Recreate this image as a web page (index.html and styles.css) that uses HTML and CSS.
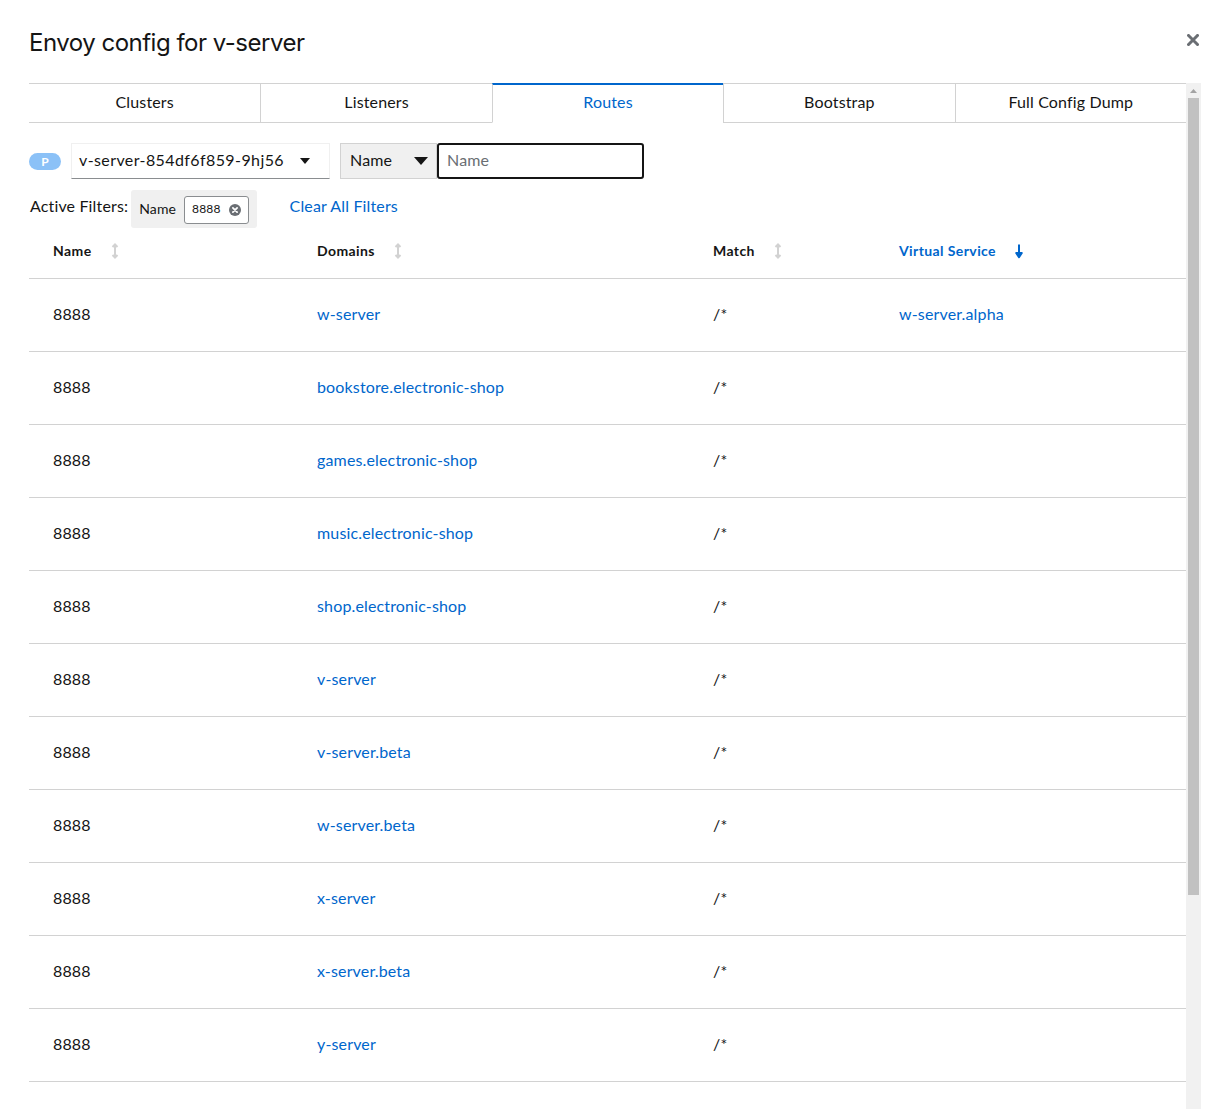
FILE: index.html
```html
<!DOCTYPE html>
<html lang="en">
<head>
<meta charset="utf-8">
<title>Envoy config for v-server</title>
<link rel="stylesheet" href="styles.css">
</head>
<body>
<div class="modal">
  <header class="modal-header">
    <h1 class="modal-title">Envoy config for v-server</h1>
    <button class="close-btn" aria-label="Close">
      <svg viewBox="0 0 12 12" width="12" height="12"><path d="M1.5 1.5 L10.5 10.5 M10.5 1.5 L1.5 10.5" stroke="#6a6e73" stroke-width="3" stroke-linecap="square"/></svg>
    </button>
  </header>
  <div class="modal-body">
    <div class="content">
      <nav class="tabs">
        <div class="tab">Clusters</div>
        <div class="tab">Listeners</div>
        <div class="tab active">Routes</div>
        <div class="tab">Bootstrap</div>
        <div class="tab">Full Config Dump</div>
      </nav>

      <div class="toolbar">
        <span class="pod-badge">P</span>
        <div class="pod-select">
          <span class="pod-name">v-server-854df6f859-9hj56</span>
          <svg class="caret" viewBox="0 0 10 6" width="10" height="6"><path d="M0 0 H10 L5 6 Z" fill="#151515"/></svg>
        </div>
        <div class="filter-group">
          <div class="filter-type">
            <span>Name</span>
            <svg class="caret" viewBox="0 0 14 8" width="14" height="8"><path d="M0 0 H14 L7 8 Z" fill="#151515"/></svg>
          </div>
          <div class="filter-input"><span class="placeholder">Name</span></div>
        </div>
      </div>

      <div class="active-filters">
        <span class="af-label">Active Filters:</span>
        <div class="chip-group">
          <span class="chip-cat">Name</span>
          <span class="chip">8888
            <svg class="chip-x" viewBox="0 0 12 12" width="12" height="12"><circle cx="6" cy="6" r="6" fill="#6a6e73"/><path d="M3.9 3.9 L8.1 8.1 M8.1 3.9 L3.9 8.1" stroke="#fff" stroke-width="1.8" stroke-linecap="round"/></svg>
          </span>
        </div>
        <a class="clear-link">Clear All Filters</a>
      </div>

      <table class="routes">
        <colgroup>
          <col class="c1"><col class="c2"><col class="c3"><col class="c4">
        </colgroup>
        <thead>
          <tr>
            <th>Name<svg class="sort" viewBox="0 0 8 16" width="8" height="16"><path d="M4 1.5 V14.5 M1.5 4 L4 1.5 L6.5 4 M1.5 12 L4 14.5 L6.5 12" stroke="#d2d2d2" stroke-width="2" fill="none"/></svg></th>
            <th>Domains<svg class="sort" viewBox="0 0 8 16" width="8" height="16"><path d="M4 1.5 V14.5 M1.5 4 L4 1.5 L6.5 4 M1.5 12 L4 14.5 L6.5 12" stroke="#d2d2d2" stroke-width="2" fill="none"/></svg></th>
            <th>Match<svg class="sort" viewBox="0 0 8 16" width="8" height="16"><path d="M4 1.5 V14.5 M1.5 4 L4 1.5 L6.5 4 M1.5 12 L4 14.5 L6.5 12" stroke="#d2d2d2" stroke-width="2" fill="none"/></svg></th>
            <th class="sorted">Virtual Service<svg class="sort" viewBox="0 0 8 16" width="8" height="16"><path d="M4 1.5 V13 M1.2 10 L4 14.2 L6.8 10 Z" stroke="#06c" stroke-width="2" fill="#06c" stroke-linejoin="round"/></svg></th>
          </tr>
        </thead>
        <tbody>
          <tr><td>8888</td><td><a>w-server</a></td><td>/*</td><td><a>w-server.alpha</a></td></tr>
          <tr><td>8888</td><td><a>bookstore.electronic-shop</a></td><td>/*</td><td></td></tr>
          <tr><td>8888</td><td><a>games.electronic-shop</a></td><td>/*</td><td></td></tr>
          <tr><td>8888</td><td><a>music.electronic-shop</a></td><td>/*</td><td></td></tr>
          <tr><td>8888</td><td><a>shop.electronic-shop</a></td><td>/*</td><td></td></tr>
          <tr><td>8888</td><td><a>v-server</a></td><td>/*</td><td></td></tr>
          <tr><td>8888</td><td><a>v-server.beta</a></td><td>/*</td><td></td></tr>
          <tr><td>8888</td><td><a>w-server.beta</a></td><td>/*</td><td></td></tr>
          <tr><td>8888</td><td><a>x-server</a></td><td>/*</td><td></td></tr>
          <tr><td>8888</td><td><a>x-server.beta</a></td><td>/*</td><td></td></tr>
          <tr><td>8888</td><td><a>y-server</a></td><td>/*</td><td></td></tr>
        </tbody>
      </table>
    </div>
    <div class="scrollbar" aria-hidden="true">
      <div class="sb-button">
        <svg viewBox="0 0 7 4" width="7" height="4"><path d="M0 4 L3.5 0 L7 4 Z" fill="#a3a3a3"/></svg>
      </div>
      <div class="sb-thumb"></div>
    </div>
  </div>
</div>
</body>
</html>
```

FILE: styles.css
```css
html, body {
  margin: 0;
  padding: 0;
  background: #fff;
  overflow: hidden;
  height: 100%;
}

body {
  font-family: Lato, "Liberation Sans", sans-serif;
  font-size: 16px;
  letter-spacing: 0.15px;
  color: #151515;
}

.modal {
  position: relative;
  padding: 0 24px 0 29px;
}

.modal-header {
  padding-top: 28px;
  height: 83px;
  box-sizing: border-box;
}

.modal-title {
  margin: 0;
  font-family: Inter, "Open Sans", sans-serif;
  font-size: 24px;
  font-weight: 400;
  line-height: 30px;
  letter-spacing: -0.5px;
}

.close-btn {
  position: absolute;
  top: 34px;
  right: 26px;
  width: 12px;
  height: 12px;
  padding: 0;
  border: 0;
  background: none;
  display: flex;
}

.modal-body {
  height: calc(100vh - 83px);
  display: flex;
}

.content {
  flex: 1;
  min-width: 0;
  overflow: hidden;
}

.scrollbar {
  width: 15px;
  flex: none;
  background: #f1f1f1;
  display: flex;
  flex-direction: column;
}

.sb-button {
  height: 15px;
  display: flex;
  align-items: center;
  justify-content: center;
}

.sb-thumb {
  height: 797px;
  margin: 0 2px;
  background: #c1c1c1;
}

.tabs {
  display: grid;
  grid-template-columns: repeat(5, 1fr);
}

.tab {
  height: 40px;
  box-sizing: border-box;
  border-top: 1px solid #d2d2d2;
  border-bottom: 1px solid #d2d2d2;
  display: flex;
  align-items: center;
  justify-content: center;
  padding-bottom: 4px;
  font-size: 16px;
  color: #151515;
}

.tab + .tab {
  border-left: 1px solid #d2d2d2;
}

.tab.active {
  border-top: 2px solid #06c;
  border-bottom-color: transparent;
  color: #06c;
  padding-bottom: 5px;
}

.toolbar {
  display: flex;
  align-items: center;
  margin-top: 20px;
  height: 36px;
}

.pod-badge {
  width: 32px;
  height: 17px;
  border-radius: 9px;
  background: #8bc1f7;
  color: #fff;
  font-size: 12px;
  font-weight: 700;
  display: flex;
  align-items: center;
  justify-content: center;
  margin-right: 10px;
}

.pod-select {
  width: 259px;
  height: 36px;
  box-sizing: border-box;
  border: 1px solid #f0f0f0;
  border-bottom-color: #8a8d90;
  display: flex;
  align-items: center;
  justify-content: space-between;
  padding: 0 19px 4px 7px;
  margin-right: 10px;
}

.pod-select .caret {
  margin-top: 4px;
}

.pod-name {
  letter-spacing: 0.4px;
}

.filter-group {
  display: flex;
  height: 36px;
}

.filter-type {
  width: 97px;
  box-sizing: border-box;
  background: #f0f0f0;
  border: 1px solid #d2d2d2;
  display: flex;
  align-items: center;
  justify-content: space-between;
  padding: 0 8px 4px 9px;
}

.filter-type .caret {
  margin-top: 4px;
}

.filter-input {
  width: 207px;
  box-sizing: border-box;
  border: 2px solid #151515;
  border-radius: 3px;
  display: flex;
  align-items: center;
  padding: 0 0 4px 8px;
}

.placeholder {
  color: #6a6e73;
}

.active-filters {
  display: flex;
  align-items: center;
  margin-top: 11px;
  height: 38px;
}

.af-label {
  margin-left: 1px;
  margin-right: 3px;
  margin-top: -7px;
}

.chip-group {
  display: flex;
  align-items: center;
  height: 38px;
  box-sizing: border-box;
  background: #f0f0f0;
  border-radius: 3px;
  padding: 0 8px 0 8px;
}

.chip-cat {
  font-size: 14px;
  margin-right: 8px;
  margin-top: -1px;
}

.chip {
  display: flex;
  align-items: center;
  height: 28px;
  box-sizing: border-box;
  background: #fff;
  border: 1px solid #8a8d90;
  border-radius: 3px;
  padding: 0 7px 2px 7px;
  font-size: 12px;
  margin-top: 1px;
}

.chip-x {
  margin-left: 8px;
  margin-top: 2px;
}

.clear-link {
  color: #06c;
  margin-left: 33px;
  margin-top: -7px;
}

.routes {
  width: 100%;
  border-collapse: collapse;
  table-layout: fixed;
}

.c1 { width: 264px; }
.c2 { width: 396px; }
.c3 { width: 186px; }

.routes th {
  height: 44px;
  text-align: left;
  font-size: 14px;
  font-weight: 700;
  letter-spacing: 0.4px;
  padding: 0 0 6px 24px;
  border-bottom: 1px solid #d2d2d2;
  vertical-align: middle;
  white-space: nowrap;
}

.routes th.sorted {
  color: #06c;
}

.sort {
  vertical-align: -3px;
  margin-left: 19px;
}

.routes td {
  height: 68px;
  padding: 0 0 4px 24px;
  border-bottom: 1px solid #d2d2d2;
  vertical-align: middle;
  font-size: 16px;
}

.routes td a {
  color: #06c;
}
```
